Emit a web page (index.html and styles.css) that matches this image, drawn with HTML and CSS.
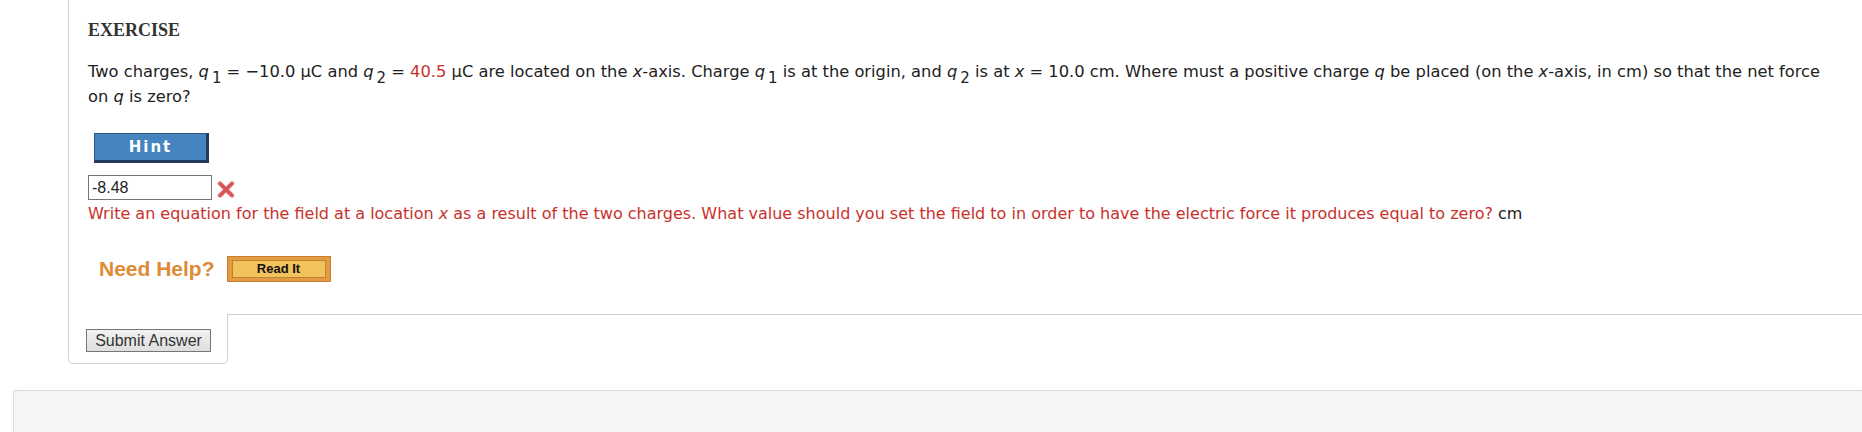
FILE: index.html
```html
<!DOCTYPE html>
<html>
<head>
<meta charset="utf-8">
<link rel="stylesheet" href="styles.css">
</head>
<body>
<div class="question">
  <div class="qbody">
    <div class="qtitle">EXERCISE</div>
    <p class="qtext">Two charges, <i class="var">q</i><sub>1</sub> = &minus;10.0 &micro;C and <i class="var">q</i><sub>2</sub> = <span class="red">40.5</span> &micro;C are located on the <i class="var">x</i>-axis. Charge <i class="var">q</i><sub>1</sub> is at the origin, and <i class="var">q</i><sub>2</sub> is at <i class="var">x</i> = 10.0 cm. Where must a positive charge <i class="var">q</i> be placed (on the <i class="var">x</i>-axis, in cm) so that the net force on <i class="var">q</i> is zero?</p>
    <button class="hint">Hint</button>
    <div class="answer-row">
      <input class="answer" type="text" value="-8.48">
      <svg class="wrong" width="18" height="17" viewBox="0 0 18 17">
        <path d="M3 2.5 L15 14.5 M15 2.5 L3 14.5" stroke="#e36a6a" stroke-width="4.4" stroke-linecap="round"/>
        <path d="M3.5 3 L14.5 14 M14.5 3 L3.5 14" stroke="#d65252" stroke-width="2" stroke-linecap="round"/>
      </svg>
    </div>
    <div class="feedback"><span class="red">Write an equation for the field at a location <i>x</i> as a result of the two charges. What value should you set the field to in order to have the electric force it produces equal to zero?</span> cm</div>
    <div class="help-row">
      <span class="need-help">Need Help?</span>
      <button class="readit"><span class="readit-inner">Read It</span></button>
    </div>
  </div>
  <div class="qfoot">
    <div class="submit-tab">
      <button class="submit">Submit Answer</button>
    </div>
    <div class="qfill"></div>
  </div>
</div>
<div class="footer-panel"></div>
</body>
</html>
```

FILE: styles.css
```css
html, body {
  margin: 0;
  padding: 0;
  background: #ffffff;
}
body {
  font-family: "DejaVu Sans", Verdana, sans-serif;
  color: #222;
  width: 1862px;
  height: 432px;
  overflow: hidden;
}
.question {
  margin-left: 68px;
  display: flex;
  flex-direction: column;
}
.qbody {
  border-left: 1px solid #cfcfcf;
  padding: 20px 20px 0 19px;
  height: 314px;
  box-sizing: border-box;
}
.qtitle {
  font-family: "Liberation Serif", "Times New Roman", serif;
  font-weight: bold;
  font-size: 18px;
  line-height: 20px;
  color: #333;
}
.qtext {
  margin: 19px 0 0 0;
  font-size: 16.3px;
  line-height: 25px;
  color: #222;
}
.qtext sub {
  font-size: 15px;
  line-height: 0;
  vertical-align: -6px;
  margin-left: 3px;
}
.var {
  font-style: italic;
}
.red {
  color: #c8312d;
}
.hint {
  display: block;
  margin: 24px 0 0 6px;
  width: 115px;
  height: 30px;
  background: #4584bf;
  border-style: solid;
  border-width: 1px 3px 3px 1px;
  border-color: #2f5580 #22395a #22395a #2f5580;
  color: #fff;
  font-family: "DejaVu Sans", Verdana, sans-serif;
  font-weight: bold;
  font-size: 15px;
  letter-spacing: 2px;
  padding: 0;
}
.answer-row {
  display: flex;
  align-items: center;
  gap: 5px;
  margin-top: 12px;
}
.answer {
  width: 124px;
  height: 25px;
  box-sizing: border-box;
  border: 1px solid #767676;
  font-family: "Liberation Sans", Arial, sans-serif;
  font-size: 16px;
  color: #222;
  padding: 0 3px;
  margin: 0;
}
.wrong {
  display: block;
  margin-top: 3px;
}
.feedback {
  font-size: 16px;
  line-height: 20px;
  margin-top: 4px;
  color: #222;
}
.help-row {
  display: flex;
  align-items: center;
  gap: 12px;
  margin: 32px 0 0 11px;
}
.need-help {
  font-family: "Liberation Sans", Arial, sans-serif;
  font-weight: bold;
  font-size: 21px;
  color: #de8b36;
}
.readit {
  display: block;
  width: 104px;
  height: 26px;
  padding: 3px 4px;
  margin: 0;
  box-sizing: border-box;
  background: #e39a42;
  border: 1px solid #c9802c;
}
.readit-inner {
  display: block;
  height: 18px;
  box-sizing: border-box;
  background: #f2c25c;
  border: 1px solid #b9852f;
  font-family: "Liberation Sans", Arial, sans-serif;
  font-weight: bold;
  font-size: 13px;
  line-height: 16px;
  color: #111;
}
.qfoot {
  display: flex;
  height: 50px;
}
.submit-tab {
  width: 160px;
  box-sizing: border-box;
  border: 1px solid #cfcfcf;
  border-top: none;
  border-radius: 0 0 5px 5px;
  padding: 15px 0 0 17px;
}
.qfill {
  flex: 1;
  border-top: 1px solid #cfcfcf;
}
.submit {
  display: block;
  width: 125px;
  height: 23px;
  margin: 0;
  padding: 0;
  border: 1px solid #767676;
  background: linear-gradient(#f2f2f2, #dedede);
  font-family: "Liberation Sans", Arial, sans-serif;
  font-size: 16px;
  color: #333;
}
.footer-panel {
  margin: 26px 0 0 13px;
  height: 60px;
  background: #f5f5f5;
  border-top: 1px solid #dcdcdc;
  border-left: 1px solid #dcdcdc;
  border-top-left-radius: 3px;
  box-shadow: 0 -3px 6px rgba(0,0,0,0.02);
}
```
